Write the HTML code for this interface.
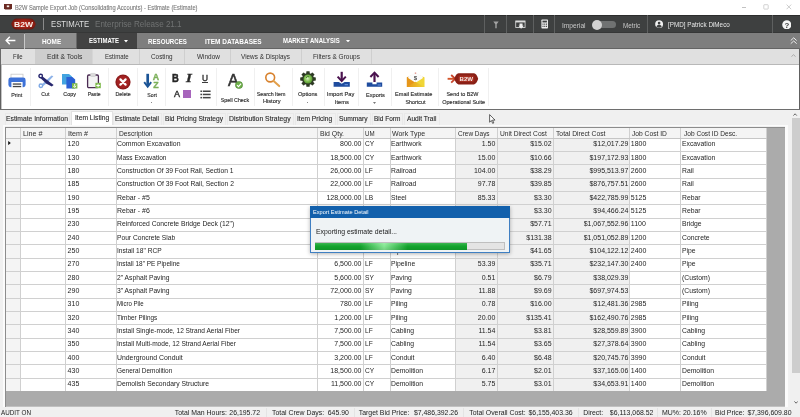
<!DOCTYPE html>
<html lang="en"><head><meta charset="utf-8"><title>B2W Sample Export Job (Consolidating Accounts) - Estimate (Estimate)</title>
<style>
html,body{margin:0;padding:0;background:#fff;overflow:hidden}
#app{position:relative;width:800px;height:417px;overflow:hidden;will-change:transform;font-family:"Liberation Sans",sans-serif}
#app div,#app span,#app svg{position:absolute;display:block}
#app span{white-space:pre}
</style></head><body><div id="app">
<div style="left:0px;top:0px;width:800px;height:15px;background:#ffffff;"></div>
<svg style="left:4px;top:4.4px" width="8" height="5.4" viewBox="0 0 8 5.4"><path d="M0 0h8v4.2l-1 1.2h-6l-1-1.2z" fill="#6a2a22"/><rect x="2.8" y="1.4" width="2.4" height="1.8" fill="#f6eae6"/></svg>
<span style="left:15.00px;top:2.10px;line-height:11px;font-family:'Liberation Sans', sans-serif;font-size:6.4px;color:#787878;transform:scaleX(0.8967);transform-origin:0 50%;-webkit-text-stroke:0.1px #787878;">B2W Sample Export Job (Consolidating Accounts) - Estimate (Estimate)</span>
<div style="left:742.4px;top:7px;width:3.4px;height:1px;background:#c2c2c2;"></div>
<svg style="left:763px;top:4px" width="6" height="6" viewBox="0 0 6 6"><rect x="0.8" y="0.7" width="4.4" height="4.4" rx="0.6" fill="none" stroke="#c0c0c0" stroke-width="0.7"/></svg>
<svg style="left:786px;top:4px" width="6" height="6" viewBox="0 0 6 6"><path d="M0.6 0.6L5.2 5.2M5.2 0.6L0.6 5.2" stroke="#bcbcbc" stroke-width="0.75" fill="none"/></svg>
<div style="left:0px;top:15px;width:800px;height:18px;background:#3e4040;"></div>
<div style="left:0px;top:15px;width:800px;height:1px;background:#2c2d2d;"></div>
<div style="left:0px;top:32px;width:800px;height:1px;background:#363737;"></div>
<svg style="left:9px;top:17px" width="29" height="14" viewBox="0 0 29 14">
<defs><radialGradient id="lg" cx="50%" cy="50%" r="60%"><stop offset="0" stop-color="#c22a1a"/><stop offset="0.6" stop-color="#9a2014"/><stop offset="1" stop-color="#5c1810"/></radialGradient></defs>
<path d="M7 1.4h15q3.400 0.600 4.800 5.600q-1.400 5-4.800 5.600h-15q-3.400-0.600-4.800-5.600q1.400-5 4.800-5.600z" fill="url(#lg)"/>
<text x="14.500" y="9.500" font-family="Liberation Sans, sans-serif" font-weight="bold" font-size="6.400" fill="#f6eee8" text-anchor="middle" textLength="19" lengthAdjust="spacingAndGlyphs">B2W</text></svg>
<div style="left:43px;top:18px;width:1px;height:12px;background:#8a8a8a;"></div>
<span style="left:51.40px;top:17.20px;line-height:14px;font-family:'Liberation Sans', sans-serif;font-size:8.9px;color:#dedede;transform:scaleX(0.8757);transform-origin:0 50%;">ESTIMATE</span>
<span style="left:94.90px;top:17.40px;line-height:14px;font-family:'Liberation Sans', sans-serif;font-size:8.7px;color:#707272;transform:scaleX(0.9290);transform-origin:0 50%;">Enterprise Release 21.1</span>
<div style="left:484px;top:15px;width:1px;height:18px;background:#5e6060;"></div>
<div style="left:506.4px;top:15px;width:1px;height:18px;background:#5e6060;"></div>
<div style="left:533.4px;top:15px;width:1px;height:18px;background:#5e6060;"></div>
<div style="left:554.3px;top:15px;width:1px;height:18px;background:#5e6060;"></div>
<div style="left:647px;top:15px;width:1px;height:18px;background:#5e6060;"></div>
<div style="left:772px;top:15px;width:1px;height:18px;background:#5e6060;"></div>
<svg style="left:492.6px;top:21px" width="6" height="7.6" viewBox="0 0 6 7.6"><path d="M0.300 0.400h5.400L3.700 3.200v4H2.300V3.200z" fill="#a2a2a2"/></svg>
<svg style="left:515.4px;top:20.2px" width="10.8" height="9.400" viewBox="0 0 12 10" preserveAspectRatio="none"><rect x="0.8" y="1" width="10.4" height="7" fill="none" stroke="#dcdcdc" stroke-width="0.9"/><rect x="0.8" y="1" width="10.4" height="1.6" fill="#dcdcdc"/><path d="M5 3.8h3.4v2.2h1.3L6.8 9.4 3.8 6h1.2z" fill="#f0f0f0"/></svg>
<svg style="left:540.6px;top:19.4px" width="7.4" height="10" viewBox="0 0 9 11" preserveAspectRatio="none"><rect x="0.5" y="0.5" width="8" height="10" rx="0.8" fill="#efefef"/><rect x="1.8" y="1.8" width="5.4" height="2" fill="#3e4040"/><g fill="#3e4040"><rect x="1.8" y="5" width="1.3" height="1.3"/><rect x="3.9" y="5" width="1.3" height="1.3"/><rect x="6" y="5" width="1.3" height="1.3"/><rect x="1.8" y="7.4" width="1.3" height="1.3"/><rect x="3.9" y="7.4" width="1.3" height="1.3"/><rect x="6" y="7.4" width="1.3" height="1.3"/></g></svg>
<span style="left:561.60px;top:19.80px;line-height:11px;font-family:'Liberation Sans', sans-serif;font-size:6.5px;color:#c8c8c8;transform:scaleX(1.0205);transform-origin:0 50%;">Imperial</span>
<div style="left:593px;top:21px;width:23px;height:7px;border-radius:3.5px;background:#707272"></div>
<div style="left:591.5px;top:19.5px;width:10px;height:10px;border-radius:5px;background:#d2d2d2"></div>
<span style="left:623.00px;top:19.80px;line-height:11px;font-family:'Liberation Sans', sans-serif;font-size:6.5px;color:#c8c8c8;transform:scaleX(0.9716);transform-origin:0 50%;">Metric</span>
<svg style="left:655.3px;top:20.3px" width="8.200" height="8.200" viewBox="0 0 9 9"><circle cx="4.5" cy="4.5" r="4.3" fill="#f2f2f2"/><circle cx="4.5" cy="3.4" r="1.5" fill="#3e4040"/><path d="M1.7 7.4c0.3-1.8 1.5-2.3 2.8-2.3s2.5 0.5 2.8 2.3c-0.8 0.8-1.8 1.2-2.8 1.2s-2-0.4-2.8-1.2z" fill="#3e4040"/></svg>
<span style="left:667.60px;top:19.10px;line-height:11px;font-family:'Liberation Sans', sans-serif;font-size:6.6px;color:#e8e8e8;transform:scaleX(0.9584);transform-origin:0 50%;">[PMD] Patrick DiMeco</span>
<svg style="left:781.7px;top:19.8px" width="9.600" height="9.600" viewBox="0 0 9 9"><circle cx="4.5" cy="4.5" r="4.3" fill="#f6f6f6"/><text x="4.5" y="7.2" font-family="Liberation Sans, sans-serif" font-weight="bold" font-size="7.4" fill="#3e4040" text-anchor="middle">?</text></svg>
<div style="left:0px;top:33px;width:800px;height:16px;background:#7e7e7e;"></div>
<div style="left:25px;top:33px;width:52px;height:16px;background:#8f8f8f;"></div>
<div style="left:76px;top:33px;width:1px;height:16px;background:#686868;"></div>
<div style="left:77px;top:33px;width:60px;height:16px;background:#424242;"></div>
<div style="left:0px;top:48px;width:800px;height:1px;background:#646464;"></div>
<div style="left:77px;top:48px;width:60px;height:1px;background:#3a3a3a;"></div>
<div style="left:24px;top:34px;width:1px;height:15px;background:#c8c8c8;"></div>
<svg style="left:5px;top:36px" width="11" height="9" viewBox="0 0 11 9"><path d="M4.8 0.7L1.2 4.5 4.8 8.3M1.4 4.5H10.4" stroke="#fff" stroke-width="1.5" fill="none"/></svg>
<span style="left:41.60px;top:35.80px;line-height:11px;font-family:'Liberation Sans', sans-serif;font-size:6.4px;color:#ffffff;font-weight:bold;transform:scaleX(1.0007);transform-origin:0 50%;">HOME</span>
<span style="left:89.00px;top:35.30px;line-height:11px;font-family:'Liberation Sans', sans-serif;font-size:6.4px;color:#ffffff;font-weight:bold;transform:scaleX(0.9421);transform-origin:0 50%;">ESTIMATE</span>
<svg style="left:123.6px;top:40.3px" width="4" height="2.4" viewBox="0 0 4 2.4"><path d="M0 0h4L2 2.4z" fill="#fff"/></svg>
<span style="left:147.50px;top:35.80px;line-height:11px;font-family:'Liberation Sans', sans-serif;font-size:6.4px;color:#ffffff;font-weight:bold;transform:scaleX(0.9609);transform-origin:0 50%;">RESOURCES</span>
<span style="left:205.00px;top:35.80px;line-height:11px;font-family:'Liberation Sans', sans-serif;font-size:6.4px;color:#ffffff;font-weight:bold;transform:scaleX(1.0133);transform-origin:0 50%;">ITEM DATABASES</span>
<span style="left:282.50px;top:35.10px;line-height:11px;font-family:'Liberation Sans', sans-serif;font-size:6.4px;color:#ffffff;font-weight:bold;transform:scaleX(0.9355);transform-origin:0 50%;">MARKET ANALYSIS</span>
<svg style="left:345.8px;top:39.8px" width="4" height="2.4" viewBox="0 0 4 2.4"><path d="M0 0h4L2 2.4z" fill="#fff"/></svg>
<svg style="left:789.6px;top:37.4px" width="7.400" height="7.400" viewBox="0 0 8 8"><path d="M0.8 3.8L4 0.9 7.2 3.8M0.8 7.2L4 4.3 7.2 7.2" stroke="#f4f4f4" stroke-width="1" fill="none"/></svg>
<div style="left:0px;top:49px;width:800px;height:15px;background:#e0e0e0;"></div>
<div style="left:35px;top:49px;width:57px;height:15px;background:#cecece;"></div>
<div style="left:92px;top:49px;width:1px;height:15px;background:#d6d6d6;"></div>
<div style="left:0px;top:64px;width:800px;height:1px;background:#b8b8b8;"></div>
<div style="left:0px;top:49px;width:1px;height:16px;background:#6a6a6a;"></div>
<div style="left:799px;top:49px;width:1px;height:16px;background:#606060;"></div>
<div style="left:139px;top:49px;width:1px;height:15px;background:#cfcfcf;"></div>
<div style="left:184px;top:49px;width:1px;height:15px;background:#cfcfcf;"></div>
<div style="left:230px;top:49px;width:1px;height:15px;background:#cfcfcf;"></div>
<div style="left:301px;top:49px;width:1px;height:15px;background:#cfcfcf;"></div>
<div style="left:371px;top:49px;width:1px;height:15px;background:#cfcfcf;"></div>
<span style="left:12.80px;top:51.00px;line-height:11px;font-family:'Liberation Sans', sans-serif;font-size:6.6px;color:#303030;transform:scaleX(0.9129);transform-origin:0 50%;">File</span>
<span style="left:46.60px;top:51.00px;line-height:11px;font-family:'Liberation Sans', sans-serif;font-size:6.6px;color:#303030;transform:scaleX(1.0230);transform-origin:0 50%;">Edit &amp; Tools</span>
<span style="left:104.60px;top:51.00px;line-height:11px;font-family:'Liberation Sans', sans-serif;font-size:6.6px;color:#303030;transform:scaleX(0.9238);transform-origin:0 50%;">Estimate</span>
<span style="left:151.30px;top:51.00px;line-height:11px;font-family:'Liberation Sans', sans-serif;font-size:6.6px;color:#303030;transform:scaleX(0.9660);transform-origin:0 50%;">Costing</span>
<span style="left:196.50px;top:51.00px;line-height:11px;font-family:'Liberation Sans', sans-serif;font-size:6.6px;color:#303030;transform:scaleX(0.9764);transform-origin:0 50%;">Window</span>
<span style="left:241.40px;top:51.00px;line-height:11px;font-family:'Liberation Sans', sans-serif;font-size:6.6px;color:#303030;transform:scaleX(0.9692);transform-origin:0 50%;">Views &amp; Displays</span>
<span style="left:313.30px;top:51.00px;line-height:11px;font-family:'Liberation Sans', sans-serif;font-size:6.6px;color:#303030;transform:scaleX(0.9845);transform-origin:0 50%;">Filters &amp; Groups</span>
<svg style="left:791.2px;top:54.2px" width="5" height="3" viewBox="0 0 5 3"><path d="M0.4 2.7L2.5 0.7 4.6 2.7" stroke="#9c9c9c" stroke-width="0.8" fill="none"/></svg>
<div style="left:0px;top:65px;width:800px;height:45px;background:#606060;"></div>
<div style="left:1px;top:65px;width:798px;height:44px;background:#ffffff;"></div>
<div style="left:1px;top:65px;width:1px;height:44px;background:#c4c4c4;"></div>
<div style="left:0px;top:109px;width:800px;height:1px;background:#6e6e6e;"></div>
<div style="left:30px;top:68px;width:1px;height:38px;background:#f0f0f0;"></div>
<div style="left:108px;top:68px;width:1px;height:38px;background:#f0f0f0;"></div>
<div style="left:137px;top:68px;width:1px;height:38px;background:#f0f0f0;"></div>
<div style="left:165px;top:68px;width:1px;height:38px;background:#f0f0f0;"></div>
<div style="left:216px;top:68px;width:1px;height:38px;background:#f0f0f0;"></div>
<div style="left:253.6px;top:68px;width:1px;height:38px;background:#f0f0f0;"></div>
<div style="left:291.6px;top:68px;width:1px;height:38px;background:#f0f0f0;"></div>
<div style="left:324.3px;top:68px;width:1px;height:38px;background:#f0f0f0;"></div>
<div style="left:357.8px;top:68px;width:1px;height:38px;background:#f0f0f0;"></div>
<div style="left:391px;top:68px;width:1px;height:38px;background:#f0f0f0;"></div>
<div style="left:437.6px;top:68px;width:1px;height:38px;background:#f0f0f0;"></div>
<div style="left:488.3px;top:68px;width:1px;height:38px;background:#f0f0f0;"></div>
<svg style="left:8px;top:72.8px" width="18" height="17" viewBox="0 0 18 17">
<rect x="3" y="1.2" width="12" height="5" fill="#fff" stroke="#c9c9c9" stroke-width="0.8"/>
<rect x="0.4" y="4.6" width="17.2" height="9.6" rx="2.4" fill="#3e72d8"/>
<rect x="3.4" y="9" width="11.2" height="7" fill="#fff"/>
<rect x="4.8" y="10.4" width="8.4" height="1.3" fill="#444"/><rect x="4.8" y="12.9" width="8.4" height="1.3" fill="#444"/></svg>
<span style="left:10.84px;top:89.60px;line-height:10px;font-family:'Liberation Sans', sans-serif;font-size:5.6px;color:#2c2c2c;transform:scaleX(0.9552);transform-origin:50% 50%;-webkit-text-stroke:0.14px #2c2c2c;">Print</span>
<svg style="left:37.8px;top:73px" width="17" height="16" viewBox="0 0 17 16">
<path d="M3.6 11.6L13.6 2.6 15.4 3.2 9.6 9.6 5.2 13z" fill="#8db2e8"/>
<path d="M2.6 5.2L4.6 3.4 15.6 12 13.8 13.6 8.4 10.8z" fill="#26266e"/>
<circle cx="2.7" cy="3" r="1.75" fill="#fff" stroke="#26266e" stroke-width="1.4"/>
<circle cx="2.9" cy="12.8" r="1.75" fill="#fff" stroke="#7ea8e4" stroke-width="1.4"/></svg>
<span style="left:40.94px;top:89.30px;line-height:10px;font-family:'Liberation Sans', sans-serif;font-size:5.6px;color:#2c2c2c;transform:scaleX(0.9176);transform-origin:50% 50%;-webkit-text-stroke:0.14px #2c2c2c;">Cut</span>
<svg style="left:61px;top:72px" width="17" height="17" viewBox="0 0 17 17">
<path d="M1 2h7l3 2.600v8H1z" fill="#43a4e0"/>
<path d="M5.400 5h6l2.800 2.400v9H5.400z" fill="#2a60d4"/>
<rect x="11" y="11.200" width="5.400" height="5.300" fill="#7db84a"/>
<path d="M13.700 12v2.600M12.300 13.800l1.400 1.700 1.400-1.700" stroke="#fff" stroke-width="0.9" fill="none"/></svg>
<span style="left:63.47px;top:89.30px;line-height:10px;font-family:'Liberation Sans', sans-serif;font-size:5.6px;color:#2c2c2c;transform:scaleX(0.9646);transform-origin:50% 50%;-webkit-text-stroke:0.14px #2c2c2c;">Copy</span>
<svg style="left:86.2px;top:72.2px" width="16" height="17" viewBox="0 0 16 17">
<rect x="1.6" y="3" width="10.8" height="12.6" rx="1.2" fill="#f3f3f3" stroke="#4a2a52" stroke-width="1.3"/>
<rect x="4.4" y="1.4" width="5.2" height="3" rx="0.8" fill="#dcdcdc" stroke="#b4b4b4" stroke-width="0.4"/>
<rect x="9.4" y="10.8" width="5.4" height="5.4" fill="#7db84a"/>
<path d="M12.1 11.8v3.4M10.4 13.5h3.4" stroke="#fff" stroke-width="1" fill="none"/></svg>
<span style="left:87.04px;top:89.30px;line-height:10px;font-family:'Liberation Sans', sans-serif;font-size:5.6px;color:#2c2c2c;transform:scaleX(0.9083);transform-origin:50% 50%;-webkit-text-stroke:0.14px #2c2c2c;">Paste</span>
<svg style="left:115px;top:73.5px" width="16" height="16" viewBox="0 0 16 16"><circle cx="8" cy="8" r="7.6" fill="#8e1c1c"/><circle cx="8" cy="8" r="6.2" fill="#a32222"/>
<path d="M5.4 5.4l5.2 5.2M10.6 5.4l-5.2 5.2" stroke="#fff" stroke-width="2.2" stroke-linecap="round"/></svg>
<span style="left:115.21px;top:89.30px;line-height:10px;font-family:'Liberation Sans', sans-serif;font-size:5.6px;color:#2c2c2c;transform:scaleX(0.9523);transform-origin:50% 50%;-webkit-text-stroke:0.14px #2c2c2c;">Delete</span>
<svg style="left:143px;top:73px" width="17" height="16" viewBox="0 0 17 16">
<path d="M4.700 0.800v11.600" stroke="#1b5496" stroke-width="2.700"/><path d="M1.200 9.200l3.500 4.600 3.500-4.600" stroke="#1b5496" stroke-width="1.900" fill="none"/>
<text x="13" y="7.2" font-family="Liberation Sans, sans-serif" font-weight="bold" font-size="8.8" fill="#7cb05a" stroke="#7cb05a" stroke-width="0.35" text-anchor="middle">A</text>
<text x="13" y="15.2" font-family="Liberation Sans, sans-serif" font-weight="bold" font-size="8.8" fill="#7cb05a" stroke="#7cb05a" stroke-width="0.35" text-anchor="middle">Z</text></svg>
<span style="left:146.57px;top:90.00px;line-height:10px;font-family:'Liberation Sans', sans-serif;font-size:5.6px;color:#2c2c2c;transform:scaleX(0.9352);transform-origin:50% 50%;-webkit-text-stroke:0.14px #2c2c2c;">Sort</span>
<div style="left:151px;top:102px;width:1.4px;height:1px;background:#8a8a8a;"></div>
<span style="left:171.80px;top:71.20px;line-height:16px;font-family:'Liberation Sans', sans-serif;font-size:10.2px;color:#262626;font-weight:bold;transform:scaleX(0.9240);transform-origin:0 50%;-webkit-text-stroke:0.45px #262626;">B</span>
<span style="left:186.40px;top:68.90px;line-height:19px;font-family:'Liberation Serif', serif;font-size:12px;color:#2a2a2a;font-weight:bold;font-style:italic;transform:scaleX(1.2415);transform-origin:0 50%;-webkit-text-stroke:0.35px #2a2a2a;">I</span>
<span style="left:202.00px;top:71.20px;line-height:14px;font-family:'Liberation Sans', sans-serif;font-size:8.6px;color:#333;transform:scaleX(0.9648);transform-origin:0 50%;-webkit-text-stroke:0.4px #333;">U</span>
<div style="left:202px;top:82px;width:6px;height:1.2px;background:#3c3c3c;"></div>
<span style="left:174.20px;top:86.70px;line-height:15px;font-family:'Liberation Sans', sans-serif;font-size:9.2px;color:#2e2e2e;transform:scaleX(0.9771);transform-origin:0 50%;-webkit-text-stroke:0.4px #2e2e2e;">A</span>
<div style="left:183px;top:90px;width:8px;height:8px;background:#a765bc;"></div>
<svg style="left:199.5px;top:89.5px" width="11" height="9" viewBox="0 0 11 9"><g fill="#444"><rect x="0.4" y="0.5" width="1.8" height="1.5"/><rect x="3" y="0.5" width="7.600" height="1.5"/><rect x="0.4" y="3.700" width="1.8" height="1.5"/><rect x="3" y="3.700" width="7.600" height="1.5"/><rect x="0.4" y="6.900" width="1.8" height="1.5"/><rect x="3" y="6.900" width="7.600" height="1.5"/></g></svg>
<span style="left:227.80px;top:68.10px;line-height:25px;font-family:'Liberation Sans', sans-serif;font-size:16.2px;color:#333;transform:scaleX(0.9803);transform-origin:0 50%;-webkit-text-stroke:0.55px #333;">A</span>
<svg style="left:234.6px;top:81px" width="8" height="8" viewBox="0 0 8 8"><circle cx="4" cy="4" r="3.8" fill="#4f8a34"/><circle cx="4" cy="4" r="3.1" fill="#6fb04a"/><path d="M2 4.1l1.5 1.5 2.6-3" stroke="#fff" stroke-width="1.1" fill="none"/></svg>
<span style="left:219.67px;top:94.50px;line-height:10px;font-family:'Liberation Sans', sans-serif;font-size:5.6px;color:#2c2c2c;transform:scaleX(0.9511);transform-origin:50% 50%;-webkit-text-stroke:0.14px #2c2c2c;">Spell Check</span>
<svg style="left:262.6px;top:71px" width="18" height="17" viewBox="0 0 18 17"><circle cx="7.2" cy="6.5" r="4.4" fill="none" stroke="#d8822e" stroke-width="1.6"/><path d="M10.6 9.9l5.6 5.2" stroke="#e2a04c" stroke-width="2" stroke-linecap="round"/></svg>
<span style="left:256.21px;top:89.30px;line-height:10px;font-family:'Liberation Sans', sans-serif;font-size:5.6px;color:#2c2c2c;transform:scaleX(0.9479);transform-origin:50% 50%;-webkit-text-stroke:0.14px #2c2c2c;">Search Item</span>
<span style="left:263.10px;top:96.40px;line-height:10px;font-family:'Liberation Sans', sans-serif;font-size:5.6px;color:#2c2c2c;transform:scaleX(1.0111);transform-origin:50% 50%;-webkit-text-stroke:0.14px #2c2c2c;">History</span>
<svg style="left:300.4px;top:71.3px" width="16" height="16" viewBox="-8 -8 16 16"><defs><radialGradient id="gg" cx="45%" cy="45%" r="60%"><stop offset="0" stop-color="#d8f0c0"/><stop offset="0.55" stop-color="#7fbf50"/><stop offset="1" stop-color="#4c8a2c"/></radialGradient></defs><g fill="#2e3a24"><rect x="-1.7" y="-7.8" width="3.4" height="4" rx="0.6" transform="rotate(0)"/><rect x="-1.7" y="-7.8" width="3.4" height="4" rx="0.6" transform="rotate(45)"/><rect x="-1.7" y="-7.8" width="3.4" height="4" rx="0.6" transform="rotate(90)"/><rect x="-1.7" y="-7.8" width="3.4" height="4" rx="0.6" transform="rotate(135)"/><rect x="-1.7" y="-7.8" width="3.4" height="4" rx="0.6" transform="rotate(180)"/><rect x="-1.7" y="-7.8" width="3.4" height="4" rx="0.6" transform="rotate(225)"/><rect x="-1.7" y="-7.8" width="3.4" height="4" rx="0.6" transform="rotate(270)"/><rect x="-1.7" y="-7.8" width="3.4" height="4" rx="0.6" transform="rotate(315)"/><circle r="6"/></g><circle r="4.5" fill="url(#gg)"/><path d="M-2 -1.2a2.400 2.400 0 0 1 3.200 -1" stroke="#3f7a28" stroke-width="1" fill="none"/></svg>
<span style="left:298.36px;top:89.30px;line-height:10px;font-family:'Liberation Sans', sans-serif;font-size:5.6px;color:#2c2c2c;transform:scaleX(1.0062);transform-origin:50% 50%;-webkit-text-stroke:0.14px #2c2c2c;">Options</span>
<div style="left:307px;top:102px;width:1.4px;height:1px;background:#8a8a8a;"></div>
<svg style="left:333px;top:71px" width="17" height="17" viewBox="0 0 17 17">
<path d="M8.7 0.8v8.4" stroke="#4a124e" stroke-width="2.2"/><path d="M4.6 5.6l4.1 4.4 4.1-4.4" stroke="#4a124e" stroke-width="2" fill="none"/>
<path d="M0.6 11h5.2l2.9 1.8 2.9-1.8h5.2v4.8H0.6z" fill="#1f4c9e"/><rect x="11.6" y="13" width="3.4" height="1.3" fill="#5f8ad6"/></svg>
<span style="left:327.18px;top:89.30px;line-height:10px;font-family:'Liberation Sans', sans-serif;font-size:5.6px;color:#2c2c2c;transform:scaleX(1.0131);transform-origin:50% 50%;-webkit-text-stroke:0.14px #2c2c2c;">Import Pay</span>
<span style="left:335.16px;top:96.50px;line-height:10px;font-family:'Liberation Sans', sans-serif;font-size:5.6px;color:#2c2c2c;transform:scaleX(1.0228);transform-origin:50% 50%;-webkit-text-stroke:0.14px #2c2c2c;">Items</span>
<svg style="left:366px;top:71px" width="17" height="17" viewBox="0 0 17 17">
<path d="M8.5 2.4v8.6" stroke="#4a124e" stroke-width="2.2"/><path d="M4.4 6l4.1-4.4 4.1 4.4" stroke="#4a124e" stroke-width="2" fill="none"/>
<path d="M0.8 11.6h5.6v1.6h4.2v-1.6h5.6v4.2H0.8z" fill="#1f4c9e"/><rect x="11.6" y="13.4" width="3.4" height="1.2" fill="#5f8ad6"/></svg>
<span style="left:366.12px;top:89.80px;line-height:10px;font-family:'Liberation Sans', sans-serif;font-size:5.6px;color:#2c2c2c;transform:scaleX(0.9911);transform-origin:50% 50%;-webkit-text-stroke:0.14px #2c2c2c;">Exports</span>
<svg style="left:373px;top:101.6px" width="3" height="2" viewBox="0 0 3 2"><path d="M0 0h3L1.5 2z" fill="#777"/></svg>
<svg style="left:406px;top:70.5px" width="19" height="17" viewBox="0 0 19 17">
<defs><linearGradient id="eg" x1="0" x2="1" y1="0" y2="0"><stop offset="0" stop-color="#e6961a"/><stop offset="0.5" stop-color="#ecb626"/><stop offset="1" stop-color="#f0d636"/></linearGradient></defs>
<path d="M0.9 6.300L9.500 2.400 18.300 6.300V16.100H0.900z" fill="url(#eg)"/>
<path d="M9.500 1.300L16.800 5.400V10.600L9.500 12.600 2.200 10.600V5.400z" fill="#fbfbfb"/>
<path d="M0.900 6.300L9.500 11.800 0.900 16.100z" fill="#e6961a"/>
<path d="M18.300 6.300L9.500 11.800 18.300 16.100z" fill="#f0d636"/>
<path d="M0.900 16.100L9.500 10.800 18.300 16.100z" fill="url(#eg)"/>
<rect x="8.800" y="1.700" width="1.400" height="0.800" fill="#d24a38"/>
<text x="9.500" y="9.400" font-family="Liberation Sans, sans-serif" font-weight="bold" font-size="6" fill="#4c4c4c" text-anchor="middle">$</text></svg>
<span style="left:395.44px;top:89.30px;line-height:10px;font-family:'Liberation Sans', sans-serif;font-size:5.6px;color:#2c2c2c;transform:scaleX(0.9970);transform-origin:50% 50%;-webkit-text-stroke:0.14px #2c2c2c;">Email Estimate</span>
<span style="left:404.78px;top:96.70px;line-height:10px;font-family:'Liberation Sans', sans-serif;font-size:5.6px;color:#2c2c2c;transform:scaleX(0.9595);transform-origin:50% 50%;-webkit-text-stroke:0.14px #2c2c2c;">Shortcut</span>
<svg style="left:447px;top:72px" width="32" height="14" viewBox="0 0 32 14">
<path d="M0.6 6.8h7" stroke="#d4552a" stroke-width="1.9"/><path d="M4.2 3l4 3.8-4 3.8" stroke="#c8442a" stroke-width="1.8" fill="none"/>
<path d="M11.500 1.200h15.500q2.600 0.400 4.200 5.600q-1.600 5.200-4.200 5.600h-15.500q-2.600-0.400-4.200-5.600q1.600-5.200 4.200-5.600z" fill="#8a2016"/>
<rect x="11.400" y="3.600" width="15.800" height="6.400" rx="1.400" fill="#a42c1e"/>
<text x="19.300" y="9" font-family="Liberation Sans, sans-serif" font-weight="bold" font-size="5.600" fill="#f8ece8" text-anchor="middle" textLength="13.600" lengthAdjust="spacingAndGlyphs">B2W</text></svg>
<span style="left:446.32px;top:89.30px;line-height:10px;font-family:'Liberation Sans', sans-serif;font-size:5.6px;color:#2c2c2c;transform:scaleX(0.9706);transform-origin:50% 50%;-webkit-text-stroke:0.14px #2c2c2c;">Send to B2W</span>
<span style="left:441.78px;top:96.70px;line-height:10px;font-family:'Liberation Sans', sans-serif;font-size:5.6px;color:#2c2c2c;transform:scaleX(0.9900);transform-origin:50% 50%;-webkit-text-stroke:0.14px #2c2c2c;">Operational Suite</span>
<div style="left:0px;top:110px;width:800px;height:297px;background:#f0f0f0;"></div>
<div style="left:3px;top:125px;width:785px;height:1px;background:#fbfbfb;"></div>
<div style="left:3px;top:125px;width:2px;height:282px;background:#fbfbfb;"></div>
<div style="left:785px;top:125px;width:3px;height:282px;background:#fbfbfb;"></div>
<div style="left:4.5px;top:113px;width:65.5px;height:11.5px;background:#f1f1f1;border:1px solid #e9e9e9;border-bottom:none;box-sizing:border-box;border-radius:1px 1px 0 0"></div>
<span style="left:6.00px;top:112.50px;line-height:12px;font-family:'Liberation Sans', sans-serif;font-size:7.1px;color:#262626;transform:scaleX(0.9529);transform-origin:0 50%;-webkit-text-stroke:0.1px #262626;">Estimate Information</span>
<div style="left:70.5px;top:111px;width:42.0px;height:14px;background:#fff;border:1px solid #e2e2e2;border-bottom:none;box-sizing:border-box;border-radius:1px 1px 0 0"></div>
<span style="left:74.60px;top:111.70px;line-height:12px;font-family:'Liberation Sans', sans-serif;font-size:7.1px;color:#262626;transform:scaleX(0.9426);transform-origin:0 50%;-webkit-text-stroke:0.1px #262626;">Item Listing</span>
<div style="left:113.0px;top:113px;width:48.5px;height:11.5px;background:#f1f1f1;border:1px solid #e9e9e9;border-bottom:none;box-sizing:border-box;border-radius:1px 1px 0 0"></div>
<span style="left:115.00px;top:112.50px;line-height:12px;font-family:'Liberation Sans', sans-serif;font-size:7.1px;color:#262626;transform:scaleX(0.9224);transform-origin:0 50%;-webkit-text-stroke:0.1px #262626;">Estimate Detail</span>
<div style="left:162.5px;top:113px;width:63px;height:11.5px;background:#f1f1f1;border:1px solid #e9e9e9;border-bottom:none;box-sizing:border-box;border-radius:1px 1px 0 0"></div>
<span style="left:165.00px;top:112.50px;line-height:12px;font-family:'Liberation Sans', sans-serif;font-size:7.1px;color:#262626;transform:scaleX(0.9310);transform-origin:0 50%;-webkit-text-stroke:0.1px #262626;">Bid Pricing Strategy</span>
<div style="left:226.5px;top:113px;width:67px;height:11.5px;background:#f1f1f1;border:1px solid #e9e9e9;border-bottom:none;box-sizing:border-box;border-radius:1px 1px 0 0"></div>
<span style="left:229.40px;top:112.50px;line-height:12px;font-family:'Liberation Sans', sans-serif;font-size:7.1px;color:#262626;transform:scaleX(0.9644);transform-origin:0 50%;-webkit-text-stroke:0.1px #262626;">Distribution Strategy</span>
<div style="left:294.5px;top:113px;width:41px;height:11.5px;background:#f1f1f1;border:1px solid #e9e9e9;border-bottom:none;box-sizing:border-box;border-radius:1px 1px 0 0"></div>
<span style="left:297.40px;top:112.50px;line-height:12px;font-family:'Liberation Sans', sans-serif;font-size:7.1px;color:#262626;transform:scaleX(0.9398);transform-origin:0 50%;-webkit-text-stroke:0.1px #262626;">Item Pricing</span>
<div style="left:336.5px;top:113px;width:34px;height:11.5px;background:#f1f1f1;border:1px solid #e9e9e9;border-bottom:none;box-sizing:border-box;border-radius:1px 1px 0 0"></div>
<span style="left:339.00px;top:112.50px;line-height:12px;font-family:'Liberation Sans', sans-serif;font-size:7.1px;color:#262626;transform:scaleX(0.9420);transform-origin:0 50%;-webkit-text-stroke:0.1px #262626;">Summary</span>
<div style="left:371.5px;top:113px;width:31.5px;height:11.5px;background:#f1f1f1;border:1px solid #e9e9e9;border-bottom:none;box-sizing:border-box;border-radius:1px 1px 0 0"></div>
<span style="left:374.00px;top:112.50px;line-height:12px;font-family:'Liberation Sans', sans-serif;font-size:7.1px;color:#262626;transform:scaleX(0.9173);transform-origin:0 50%;-webkit-text-stroke:0.1px #262626;">Bid Form</span>
<div style="left:404.0px;top:113px;width:35.5px;height:11.5px;background:#f1f1f1;border:1px solid #e9e9e9;border-bottom:none;box-sizing:border-box;border-radius:1px 1px 0 0"></div>
<span style="left:406.60px;top:112.50px;line-height:12px;font-family:'Liberation Sans', sans-serif;font-size:7.1px;color:#262626;transform:scaleX(0.9319);transform-origin:0 50%;-webkit-text-stroke:0.1px #262626;">Audit Trail</span>
<div style="left:5px;top:127px;width:779.6px;height:279px;background:#ababab;"></div>
<div style="left:5px;top:406px;width:779.6px;height:1px;background:#c0c0c0;"></div>
<div style="left:5px;top:127px;width:1px;height:279.6px;background:#8c8c8c;"></div>
<div style="left:5px;top:127px;width:779.6px;height:1px;background:#8c8c8c;"></div>
<div style="left:792px;top:118px;width:8px;height:255px;background:#cdcdcd;"></div>
<svg style="left:793.4px;top:112.8px" width="4.2" height="3" viewBox="0 0 4.2 3"><path d="M0.4 2.6L2.1 0.8 3.8 2.6" stroke="#555" stroke-width="0.9" fill="none"/></svg>
<svg style="left:793.5px;top:401.2px" width="4.2" height="3" viewBox="0 0 4.2 3"><path d="M0.4 0.4L2.1 2.2 3.8 0.4" stroke="#555" stroke-width="0.9" fill="none"/></svg>
<div style="left:6px;top:128px;width:761px;height:10px;background:#f4f4f4;"></div>
<div style="left:6px;top:138px;width:761px;height:253px;background:#ffffff;"></div>
<div style="left:6px;top:138px;width:14px;height:253px;background:#f4f4f4;"></div>
<div style="left:455.5px;top:139px;width:174.0px;height:252px;background:#f0f0f0;"></div>
<div style="left:20px;top:128px;width:1px;height:263px;background:#d0d0d0;"></div>
<div style="left:65px;top:128px;width:1px;height:263px;background:#d0d0d0;"></div>
<div style="left:116px;top:128px;width:1px;height:263px;background:#d0d0d0;"></div>
<div style="left:317px;top:128px;width:1px;height:263px;background:#d0d0d0;"></div>
<div style="left:363px;top:128px;width:1px;height:263px;background:#d0d0d0;"></div>
<div style="left:390px;top:128px;width:1px;height:263px;background:#d0d0d0;"></div>
<div style="left:455px;top:128px;width:1px;height:263px;background:#d0d0d0;"></div>
<div style="left:497px;top:128px;width:1px;height:263px;background:#d0d0d0;"></div>
<div style="left:553px;top:128px;width:1px;height:263px;background:#d0d0d0;"></div>
<div style="left:629px;top:128px;width:1px;height:263px;background:#d0d0d0;"></div>
<div style="left:680px;top:128px;width:1px;height:263px;background:#d0d0d0;"></div>
<div style="left:766px;top:128px;width:1px;height:263px;background:#d0d0d0;"></div>
<div style="left:6px;top:138px;width:761px;height:1px;background:#c6c6c6;"></div>
<div style="left:6px;top:151px;width:761px;height:1px;background:#d0d0d0;"></div>
<div style="left:6px;top:164px;width:761px;height:1px;background:#d0d0d0;"></div>
<div style="left:6px;top:178px;width:761px;height:1px;background:#d0d0d0;"></div>
<div style="left:6px;top:191px;width:761px;height:1px;background:#d0d0d0;"></div>
<div style="left:6px;top:204px;width:761px;height:1px;background:#d0d0d0;"></div>
<div style="left:6px;top:218px;width:761px;height:1px;background:#d0d0d0;"></div>
<div style="left:6px;top:231px;width:761px;height:1px;background:#d0d0d0;"></div>
<div style="left:6px;top:244px;width:761px;height:1px;background:#d0d0d0;"></div>
<div style="left:6px;top:258px;width:761px;height:1px;background:#d0d0d0;"></div>
<div style="left:6px;top:271px;width:761px;height:1px;background:#d0d0d0;"></div>
<div style="left:6px;top:284px;width:761px;height:1px;background:#d0d0d0;"></div>
<div style="left:6px;top:298px;width:761px;height:1px;background:#d0d0d0;"></div>
<div style="left:6px;top:311px;width:761px;height:1px;background:#d0d0d0;"></div>
<div style="left:6px;top:324px;width:761px;height:1px;background:#d0d0d0;"></div>
<div style="left:6px;top:338px;width:761px;height:1px;background:#d0d0d0;"></div>
<div style="left:6px;top:351px;width:761px;height:1px;background:#d0d0d0;"></div>
<div style="left:6px;top:364px;width:761px;height:1px;background:#d0d0d0;"></div>
<div style="left:6px;top:378px;width:761px;height:1px;background:#d0d0d0;"></div>
<span style="left:22.60px;top:127.70px;line-height:12px;font-family:'Liberation Sans', sans-serif;font-size:7.0px;color:#2c2c2c;transform:scaleX(1.0274);transform-origin:0 50%;">Line #</span>
<span style="left:68.00px;top:127.70px;line-height:12px;font-family:'Liberation Sans', sans-serif;font-size:7.0px;color:#2c2c2c;transform:scaleX(1.0281);transform-origin:0 50%;">Item #</span>
<span style="left:118.80px;top:127.70px;line-height:12px;font-family:'Liberation Sans', sans-serif;font-size:7.0px;color:#2c2c2c;transform:scaleX(0.9596);transform-origin:0 50%;">Description</span>
<span style="left:320.00px;top:127.70px;line-height:12px;font-family:'Liberation Sans', sans-serif;font-size:7.0px;color:#2c2c2c;transform:scaleX(0.9840);transform-origin:0 50%;">Bid Qty.</span>
<span style="left:365.40px;top:127.70px;line-height:12px;font-family:'Liberation Sans', sans-serif;font-size:7.0px;color:#2c2c2c;transform:scaleX(0.8815);transform-origin:0 50%;">UM</span>
<span style="left:392.40px;top:127.70px;line-height:12px;font-family:'Liberation Sans', sans-serif;font-size:7.0px;color:#2c2c2c;transform:scaleX(0.9999);transform-origin:0 50%;">Work Type</span>
<span style="left:458.10px;top:127.70px;line-height:12px;font-family:'Liberation Sans', sans-serif;font-size:7.0px;color:#2c2c2c;transform:scaleX(0.9230);transform-origin:0 50%;">Crew Days</span>
<span style="left:499.90px;top:127.70px;line-height:12px;font-family:'Liberation Sans', sans-serif;font-size:7.0px;color:#2c2c2c;transform:scaleX(0.9548);transform-origin:0 50%;">Unit Direct Cost</span>
<span style="left:556.20px;top:127.70px;line-height:12px;font-family:'Liberation Sans', sans-serif;font-size:7.0px;color:#2c2c2c;transform:scaleX(0.9638);transform-origin:0 50%;">Total Direct Cost</span>
<span style="left:632.30px;top:127.70px;line-height:12px;font-family:'Liberation Sans', sans-serif;font-size:7.0px;color:#2c2c2c;transform:scaleX(0.9541);transform-origin:0 50%;">Job Cost ID</span>
<span style="left:683.75px;top:127.70px;line-height:12px;font-family:'Liberation Sans', sans-serif;font-size:7.0px;color:#2c2c2c;transform:scaleX(0.9411);transform-origin:0 50%;">Job Cost ID Desc.</span>
<span style="left:67.60px;top:138.30px;line-height:12px;font-family:'Liberation Sans', sans-serif;font-size:7.0px;color:#1e1e1e;transform:scaleX(1.0000);transform-origin:0 50%;">120</span>
<span style="left:117.40px;top:138.30px;line-height:12px;font-family:'Liberation Sans', sans-serif;font-size:7.1px;color:#1e1e1e;transform:scaleX(0.9702);transform-origin:0 50%;">Common Excavation</span>
<span style="left:340.08px;top:138.30px;line-height:12px;font-family:'Liberation Sans', sans-serif;font-size:7.0px;color:#1e1e1e;transform:scaleX(1.0000);transform-origin:100% 50%;">800.00</span>
<span style="left:364.60px;top:138.30px;line-height:12px;font-family:'Liberation Sans', sans-serif;font-size:7.0px;color:#1e1e1e;transform:scaleX(0.9434);transform-origin:0 50%;">CY</span>
<span style="left:391.30px;top:138.30px;line-height:12px;font-family:'Liberation Sans', sans-serif;font-size:7.21px;color:#1e1e1e;transform:scaleX(0.9434);transform-origin:0 50%;">Earthwork</span>
<span style="left:481.77px;top:138.30px;line-height:12px;font-family:'Liberation Sans', sans-serif;font-size:7.0px;color:#1e1e1e;transform:scaleX(1.0000);transform-origin:100% 50%;">1.50</span>
<span style="left:530.18px;top:138.30px;line-height:12px;font-family:'Liberation Sans', sans-serif;font-size:7.0px;color:#1e1e1e;transform:scaleX(1.0000);transform-origin:100% 50%;">$15.02</span>
<span style="left:593.35px;top:138.30px;line-height:12px;font-family:'Liberation Sans', sans-serif;font-size:7.0px;color:#1e1e1e;transform:scaleX(1.0000);transform-origin:100% 50%;">$12,017.29</span>
<span style="left:630.80px;top:138.30px;line-height:12px;font-family:'Liberation Sans', sans-serif;font-size:7.0px;color:#1e1e1e;transform:scaleX(1.0000);transform-origin:0 50%;">1800</span>
<span style="left:682.40px;top:138.30px;line-height:12px;font-family:'Liberation Sans', sans-serif;font-size:7.21px;color:#1e1e1e;transform:scaleX(0.9434);transform-origin:0 50%;">Excavation</span>
<span style="left:67.60px;top:151.63px;line-height:12px;font-family:'Liberation Sans', sans-serif;font-size:7.0px;color:#1e1e1e;transform:scaleX(1.0000);transform-origin:0 50%;">130</span>
<span style="left:117.40px;top:151.63px;line-height:12px;font-family:'Liberation Sans', sans-serif;font-size:7.1px;color:#1e1e1e;transform:scaleX(0.9231);transform-origin:0 50%;">Mass Excavation</span>
<span style="left:330.34px;top:151.63px;line-height:12px;font-family:'Liberation Sans', sans-serif;font-size:7.0px;color:#1e1e1e;transform:scaleX(1.0000);transform-origin:100% 50%;">18,500.00</span>
<span style="left:364.60px;top:151.63px;line-height:12px;font-family:'Liberation Sans', sans-serif;font-size:7.0px;color:#1e1e1e;transform:scaleX(0.9434);transform-origin:0 50%;">CY</span>
<span style="left:391.30px;top:151.63px;line-height:12px;font-family:'Liberation Sans', sans-serif;font-size:7.21px;color:#1e1e1e;transform:scaleX(0.9434);transform-origin:0 50%;">Earthwork</span>
<span style="left:477.87px;top:151.63px;line-height:12px;font-family:'Liberation Sans', sans-serif;font-size:7.0px;color:#1e1e1e;transform:scaleX(1.0000);transform-origin:100% 50%;">15.00</span>
<span style="left:530.18px;top:151.63px;line-height:12px;font-family:'Liberation Sans', sans-serif;font-size:7.0px;color:#1e1e1e;transform:scaleX(1.0000);transform-origin:100% 50%;">$10.66</span>
<span style="left:589.46px;top:151.63px;line-height:12px;font-family:'Liberation Sans', sans-serif;font-size:7.0px;color:#1e1e1e;transform:scaleX(1.0000);transform-origin:100% 50%;">$197,172.93</span>
<span style="left:630.80px;top:151.63px;line-height:12px;font-family:'Liberation Sans', sans-serif;font-size:7.0px;color:#1e1e1e;transform:scaleX(1.0000);transform-origin:0 50%;">1800</span>
<span style="left:682.40px;top:151.63px;line-height:12px;font-family:'Liberation Sans', sans-serif;font-size:7.21px;color:#1e1e1e;transform:scaleX(0.9434);transform-origin:0 50%;">Excavation</span>
<span style="left:67.60px;top:164.97px;line-height:12px;font-family:'Liberation Sans', sans-serif;font-size:7.0px;color:#1e1e1e;transform:scaleX(1.0000);transform-origin:0 50%;">180</span>
<span style="left:117.40px;top:164.97px;line-height:12px;font-family:'Liberation Sans', sans-serif;font-size:7.1px;color:#1e1e1e;transform:scaleX(0.9469);transform-origin:0 50%;">Construction Of 39 Foot Rail, Section 1</span>
<span style="left:330.34px;top:164.97px;line-height:12px;font-family:'Liberation Sans', sans-serif;font-size:7.0px;color:#1e1e1e;transform:scaleX(1.0000);transform-origin:100% 50%;">26,000.00</span>
<span style="left:364.60px;top:164.97px;line-height:12px;font-family:'Liberation Sans', sans-serif;font-size:7.0px;color:#1e1e1e;transform:scaleX(0.9434);transform-origin:0 50%;">LF</span>
<span style="left:391.30px;top:164.97px;line-height:12px;font-family:'Liberation Sans', sans-serif;font-size:7.21px;color:#1e1e1e;transform:scaleX(0.9434);transform-origin:0 50%;">Railroad</span>
<span style="left:473.98px;top:164.97px;line-height:12px;font-family:'Liberation Sans', sans-serif;font-size:7.0px;color:#1e1e1e;transform:scaleX(1.0000);transform-origin:100% 50%;">104.00</span>
<span style="left:530.18px;top:164.97px;line-height:12px;font-family:'Liberation Sans', sans-serif;font-size:7.0px;color:#1e1e1e;transform:scaleX(1.0000);transform-origin:100% 50%;">$38.29</span>
<span style="left:589.46px;top:164.97px;line-height:12px;font-family:'Liberation Sans', sans-serif;font-size:7.0px;color:#1e1e1e;transform:scaleX(1.0000);transform-origin:100% 50%;">$995,513.97</span>
<span style="left:630.80px;top:164.97px;line-height:12px;font-family:'Liberation Sans', sans-serif;font-size:7.0px;color:#1e1e1e;transform:scaleX(1.0000);transform-origin:0 50%;">2600</span>
<span style="left:682.40px;top:164.97px;line-height:12px;font-family:'Liberation Sans', sans-serif;font-size:7.21px;color:#1e1e1e;transform:scaleX(0.9434);transform-origin:0 50%;">Rail</span>
<span style="left:67.60px;top:178.30px;line-height:12px;font-family:'Liberation Sans', sans-serif;font-size:7.0px;color:#1e1e1e;transform:scaleX(1.0000);transform-origin:0 50%;">185</span>
<span style="left:117.40px;top:178.30px;line-height:12px;font-family:'Liberation Sans', sans-serif;font-size:7.1px;color:#1e1e1e;transform:scaleX(0.9502);transform-origin:0 50%;">Construction Of 39 Foot Rail, Section 2</span>
<span style="left:330.34px;top:178.30px;line-height:12px;font-family:'Liberation Sans', sans-serif;font-size:7.0px;color:#1e1e1e;transform:scaleX(1.0000);transform-origin:100% 50%;">22,000.00</span>
<span style="left:364.60px;top:178.30px;line-height:12px;font-family:'Liberation Sans', sans-serif;font-size:7.0px;color:#1e1e1e;transform:scaleX(0.9434);transform-origin:0 50%;">LF</span>
<span style="left:391.30px;top:178.30px;line-height:12px;font-family:'Liberation Sans', sans-serif;font-size:7.21px;color:#1e1e1e;transform:scaleX(0.9434);transform-origin:0 50%;">Railroad</span>
<span style="left:477.87px;top:178.30px;line-height:12px;font-family:'Liberation Sans', sans-serif;font-size:7.0px;color:#1e1e1e;transform:scaleX(1.0000);transform-origin:100% 50%;">97.78</span>
<span style="left:530.18px;top:178.30px;line-height:12px;font-family:'Liberation Sans', sans-serif;font-size:7.0px;color:#1e1e1e;transform:scaleX(1.0000);transform-origin:100% 50%;">$39.85</span>
<span style="left:589.46px;top:178.30px;line-height:12px;font-family:'Liberation Sans', sans-serif;font-size:7.0px;color:#1e1e1e;transform:scaleX(1.0000);transform-origin:100% 50%;">$876,757.51</span>
<span style="left:630.80px;top:178.30px;line-height:12px;font-family:'Liberation Sans', sans-serif;font-size:7.0px;color:#1e1e1e;transform:scaleX(1.0000);transform-origin:0 50%;">2600</span>
<span style="left:682.40px;top:178.30px;line-height:12px;font-family:'Liberation Sans', sans-serif;font-size:7.21px;color:#1e1e1e;transform:scaleX(0.9434);transform-origin:0 50%;">Rail</span>
<span style="left:67.60px;top:191.63px;line-height:12px;font-family:'Liberation Sans', sans-serif;font-size:7.0px;color:#1e1e1e;transform:scaleX(1.0000);transform-origin:0 50%;">190</span>
<span style="left:117.40px;top:191.63px;line-height:12px;font-family:'Liberation Sans', sans-serif;font-size:7.1px;color:#1e1e1e;transform:scaleX(0.9801);transform-origin:0 50%;">Rebar - #5</span>
<span style="left:326.45px;top:191.63px;line-height:12px;font-family:'Liberation Sans', sans-serif;font-size:7.0px;color:#1e1e1e;transform:scaleX(1.0000);transform-origin:100% 50%;">128,000.00</span>
<span style="left:364.60px;top:191.63px;line-height:12px;font-family:'Liberation Sans', sans-serif;font-size:7.0px;color:#1e1e1e;transform:scaleX(0.9434);transform-origin:0 50%;">LB</span>
<span style="left:391.30px;top:191.63px;line-height:12px;font-family:'Liberation Sans', sans-serif;font-size:7.21px;color:#1e1e1e;transform:scaleX(0.9434);transform-origin:0 50%;">Steel</span>
<span style="left:477.87px;top:191.63px;line-height:12px;font-family:'Liberation Sans', sans-serif;font-size:7.0px;color:#1e1e1e;transform:scaleX(1.0000);transform-origin:100% 50%;">85.33</span>
<span style="left:534.07px;top:191.63px;line-height:12px;font-family:'Liberation Sans', sans-serif;font-size:7.0px;color:#1e1e1e;transform:scaleX(1.0000);transform-origin:100% 50%;">$3.30</span>
<span style="left:589.46px;top:191.63px;line-height:12px;font-family:'Liberation Sans', sans-serif;font-size:7.0px;color:#1e1e1e;transform:scaleX(1.0000);transform-origin:100% 50%;">$422,785.99</span>
<span style="left:630.80px;top:191.63px;line-height:12px;font-family:'Liberation Sans', sans-serif;font-size:7.0px;color:#1e1e1e;transform:scaleX(1.0000);transform-origin:0 50%;">5125</span>
<span style="left:682.40px;top:191.63px;line-height:12px;font-family:'Liberation Sans', sans-serif;font-size:7.21px;color:#1e1e1e;transform:scaleX(0.9434);transform-origin:0 50%;">Rebar</span>
<span style="left:67.60px;top:204.96px;line-height:12px;font-family:'Liberation Sans', sans-serif;font-size:7.0px;color:#1e1e1e;transform:scaleX(1.0000);transform-origin:0 50%;">195</span>
<span style="left:117.40px;top:204.96px;line-height:12px;font-family:'Liberation Sans', sans-serif;font-size:7.1px;color:#1e1e1e;transform:scaleX(0.9801);transform-origin:0 50%;">Rebar - #6</span>
<span style="left:534.07px;top:204.96px;line-height:12px;font-family:'Liberation Sans', sans-serif;font-size:7.0px;color:#1e1e1e;transform:scaleX(1.0000);transform-origin:100% 50%;">$3.30</span>
<span style="left:593.35px;top:204.96px;line-height:12px;font-family:'Liberation Sans', sans-serif;font-size:7.0px;color:#1e1e1e;transform:scaleX(1.0000);transform-origin:100% 50%;">$94,466.24</span>
<span style="left:630.80px;top:204.96px;line-height:12px;font-family:'Liberation Sans', sans-serif;font-size:7.0px;color:#1e1e1e;transform:scaleX(1.0000);transform-origin:0 50%;">5125</span>
<span style="left:682.40px;top:204.96px;line-height:12px;font-family:'Liberation Sans', sans-serif;font-size:7.21px;color:#1e1e1e;transform:scaleX(0.9434);transform-origin:0 50%;">Rebar</span>
<span style="left:67.60px;top:218.30px;line-height:12px;font-family:'Liberation Sans', sans-serif;font-size:7.0px;color:#1e1e1e;transform:scaleX(1.0000);transform-origin:0 50%;">230</span>
<span style="left:117.40px;top:218.30px;line-height:12px;font-family:'Liberation Sans', sans-serif;font-size:7.1px;color:#1e1e1e;transform:scaleX(0.9545);transform-origin:0 50%;">Reinforced Concrete Bridge Deck (12&quot;)</span>
<span style="left:530.18px;top:218.30px;line-height:12px;font-family:'Liberation Sans', sans-serif;font-size:7.0px;color:#1e1e1e;transform:scaleX(1.0000);transform-origin:100% 50%;">$57.71</span>
<span style="left:583.63px;top:218.30px;line-height:12px;font-family:'Liberation Sans', sans-serif;font-size:7.0px;color:#1e1e1e;transform:scaleX(1.0000);transform-origin:100% 50%;">$1,067,552.96</span>
<span style="left:630.80px;top:218.30px;line-height:12px;font-family:'Liberation Sans', sans-serif;font-size:7.0px;color:#1e1e1e;transform:scaleX(1.0000);transform-origin:0 50%;">1100</span>
<span style="left:682.40px;top:218.30px;line-height:12px;font-family:'Liberation Sans', sans-serif;font-size:7.21px;color:#1e1e1e;transform:scaleX(0.9434);transform-origin:0 50%;">Bridge</span>
<span style="left:67.60px;top:231.63px;line-height:12px;font-family:'Liberation Sans', sans-serif;font-size:7.0px;color:#1e1e1e;transform:scaleX(1.0000);transform-origin:0 50%;">240</span>
<span style="left:117.40px;top:231.63px;line-height:12px;font-family:'Liberation Sans', sans-serif;font-size:7.1px;color:#1e1e1e;transform:scaleX(0.9399);transform-origin:0 50%;">Pour Concrete Slab</span>
<span style="left:526.29px;top:231.63px;line-height:12px;font-family:'Liberation Sans', sans-serif;font-size:7.0px;color:#1e1e1e;transform:scaleX(1.0000);transform-origin:100% 50%;">$131.38</span>
<span style="left:583.63px;top:231.63px;line-height:12px;font-family:'Liberation Sans', sans-serif;font-size:7.0px;color:#1e1e1e;transform:scaleX(1.0000);transform-origin:100% 50%;">$1,051,052.89</span>
<span style="left:630.80px;top:231.63px;line-height:12px;font-family:'Liberation Sans', sans-serif;font-size:7.0px;color:#1e1e1e;transform:scaleX(1.0000);transform-origin:0 50%;">1200</span>
<span style="left:682.40px;top:231.63px;line-height:12px;font-family:'Liberation Sans', sans-serif;font-size:7.21px;color:#1e1e1e;transform:scaleX(0.9434);transform-origin:0 50%;">Concrete</span>
<span style="left:67.60px;top:244.96px;line-height:12px;font-family:'Liberation Sans', sans-serif;font-size:7.0px;color:#1e1e1e;transform:scaleX(1.0000);transform-origin:0 50%;">250</span>
<span style="left:117.40px;top:244.96px;line-height:12px;font-family:'Liberation Sans', sans-serif;font-size:7.1px;color:#1e1e1e;transform:scaleX(0.9319);transform-origin:0 50%;">Install 18&quot; RCP</span>
<span style="left:391.30px;top:244.96px;line-height:12px;font-family:'Liberation Sans', sans-serif;font-size:7.21px;color:#1e1e1e;transform:scaleX(0.9434);transform-origin:0 50%;">Pipeline</span>
<span style="left:530.18px;top:244.96px;line-height:12px;font-family:'Liberation Sans', sans-serif;font-size:7.0px;color:#1e1e1e;transform:scaleX(1.0000);transform-origin:100% 50%;">$41.65</span>
<span style="left:589.46px;top:244.96px;line-height:12px;font-family:'Liberation Sans', sans-serif;font-size:7.0px;color:#1e1e1e;transform:scaleX(1.0000);transform-origin:100% 50%;">$104,122.12</span>
<span style="left:630.80px;top:244.96px;line-height:12px;font-family:'Liberation Sans', sans-serif;font-size:7.0px;color:#1e1e1e;transform:scaleX(1.0000);transform-origin:0 50%;">2400</span>
<span style="left:682.40px;top:244.96px;line-height:12px;font-family:'Liberation Sans', sans-serif;font-size:7.21px;color:#1e1e1e;transform:scaleX(0.9434);transform-origin:0 50%;">Pipe</span>
<span style="left:67.60px;top:258.30px;line-height:12px;font-family:'Liberation Sans', sans-serif;font-size:7.0px;color:#1e1e1e;transform:scaleX(1.0000);transform-origin:0 50%;">270</span>
<span style="left:117.40px;top:258.30px;line-height:12px;font-family:'Liberation Sans', sans-serif;font-size:7.1px;color:#1e1e1e;transform:scaleX(0.9049);transform-origin:0 50%;">Install 18&quot; PE Pipeline</span>
<span style="left:334.25px;top:258.30px;line-height:12px;font-family:'Liberation Sans', sans-serif;font-size:7.0px;color:#1e1e1e;transform:scaleX(1.0000);transform-origin:100% 50%;">6,500.00</span>
<span style="left:364.60px;top:258.30px;line-height:12px;font-family:'Liberation Sans', sans-serif;font-size:7.0px;color:#1e1e1e;transform:scaleX(0.9434);transform-origin:0 50%;">LF</span>
<span style="left:391.30px;top:258.30px;line-height:12px;font-family:'Liberation Sans', sans-serif;font-size:7.21px;color:#1e1e1e;transform:scaleX(0.9434);transform-origin:0 50%;">Pipeline</span>
<span style="left:477.87px;top:258.30px;line-height:12px;font-family:'Liberation Sans', sans-serif;font-size:7.0px;color:#1e1e1e;transform:scaleX(1.0000);transform-origin:100% 50%;">53.39</span>
<span style="left:530.18px;top:258.30px;line-height:12px;font-family:'Liberation Sans', sans-serif;font-size:7.0px;color:#1e1e1e;transform:scaleX(1.0000);transform-origin:100% 50%;">$35.71</span>
<span style="left:589.46px;top:258.30px;line-height:12px;font-family:'Liberation Sans', sans-serif;font-size:7.0px;color:#1e1e1e;transform:scaleX(1.0000);transform-origin:100% 50%;">$232,147.30</span>
<span style="left:630.80px;top:258.30px;line-height:12px;font-family:'Liberation Sans', sans-serif;font-size:7.0px;color:#1e1e1e;transform:scaleX(1.0000);transform-origin:0 50%;">2400</span>
<span style="left:682.40px;top:258.30px;line-height:12px;font-family:'Liberation Sans', sans-serif;font-size:7.21px;color:#1e1e1e;transform:scaleX(0.9434);transform-origin:0 50%;">Pipe</span>
<span style="left:67.60px;top:271.63px;line-height:12px;font-family:'Liberation Sans', sans-serif;font-size:7.0px;color:#1e1e1e;transform:scaleX(1.0000);transform-origin:0 50%;">280</span>
<span style="left:117.40px;top:271.63px;line-height:12px;font-family:'Liberation Sans', sans-serif;font-size:7.1px;color:#1e1e1e;transform:scaleX(0.9472);transform-origin:0 50%;">2&quot; Asphalt Paving</span>
<span style="left:334.25px;top:271.63px;line-height:12px;font-family:'Liberation Sans', sans-serif;font-size:7.0px;color:#1e1e1e;transform:scaleX(1.0000);transform-origin:100% 50%;">5,600.00</span>
<span style="left:364.60px;top:271.63px;line-height:12px;font-family:'Liberation Sans', sans-serif;font-size:7.0px;color:#1e1e1e;transform:scaleX(0.9434);transform-origin:0 50%;">SY</span>
<span style="left:391.30px;top:271.63px;line-height:12px;font-family:'Liberation Sans', sans-serif;font-size:7.21px;color:#1e1e1e;transform:scaleX(0.9434);transform-origin:0 50%;">Paving</span>
<span style="left:481.77px;top:271.63px;line-height:12px;font-family:'Liberation Sans', sans-serif;font-size:7.0px;color:#1e1e1e;transform:scaleX(1.0000);transform-origin:100% 50%;">0.51</span>
<span style="left:534.07px;top:271.63px;line-height:12px;font-family:'Liberation Sans', sans-serif;font-size:7.0px;color:#1e1e1e;transform:scaleX(1.0000);transform-origin:100% 50%;">$6.79</span>
<span style="left:593.35px;top:271.63px;line-height:12px;font-family:'Liberation Sans', sans-serif;font-size:7.0px;color:#1e1e1e;transform:scaleX(1.0000);transform-origin:100% 50%;">$38,029.39</span>
<span style="left:682.40px;top:271.63px;line-height:12px;font-family:'Liberation Sans', sans-serif;font-size:7.21px;color:#1e1e1e;transform:scaleX(0.9434);transform-origin:0 50%;">(Custom)</span>
<span style="left:67.60px;top:284.96px;line-height:12px;font-family:'Liberation Sans', sans-serif;font-size:7.0px;color:#1e1e1e;transform:scaleX(1.0000);transform-origin:0 50%;">290</span>
<span style="left:117.40px;top:284.96px;line-height:12px;font-family:'Liberation Sans', sans-serif;font-size:7.1px;color:#1e1e1e;transform:scaleX(0.9472);transform-origin:0 50%;">3&quot; Asphalt Paving</span>
<span style="left:330.34px;top:284.96px;line-height:12px;font-family:'Liberation Sans', sans-serif;font-size:7.0px;color:#1e1e1e;transform:scaleX(1.0000);transform-origin:100% 50%;">72,000.00</span>
<span style="left:364.60px;top:284.96px;line-height:12px;font-family:'Liberation Sans', sans-serif;font-size:7.0px;color:#1e1e1e;transform:scaleX(0.9434);transform-origin:0 50%;">SY</span>
<span style="left:391.30px;top:284.96px;line-height:12px;font-family:'Liberation Sans', sans-serif;font-size:7.21px;color:#1e1e1e;transform:scaleX(0.9434);transform-origin:0 50%;">Paving</span>
<span style="left:478.40px;top:284.96px;line-height:12px;font-family:'Liberation Sans', sans-serif;font-size:7.0px;color:#1e1e1e;transform:scaleX(1.0000);transform-origin:100% 50%;">11.88</span>
<span style="left:534.07px;top:284.96px;line-height:12px;font-family:'Liberation Sans', sans-serif;font-size:7.0px;color:#1e1e1e;transform:scaleX(1.0000);transform-origin:100% 50%;">$9.69</span>
<span style="left:589.46px;top:284.96px;line-height:12px;font-family:'Liberation Sans', sans-serif;font-size:7.0px;color:#1e1e1e;transform:scaleX(1.0000);transform-origin:100% 50%;">$697,974.53</span>
<span style="left:682.40px;top:284.96px;line-height:12px;font-family:'Liberation Sans', sans-serif;font-size:7.21px;color:#1e1e1e;transform:scaleX(0.9434);transform-origin:0 50%;">(Custom)</span>
<span style="left:67.60px;top:298.30px;line-height:12px;font-family:'Liberation Sans', sans-serif;font-size:7.0px;color:#1e1e1e;transform:scaleX(1.0000);transform-origin:0 50%;">310</span>
<span style="left:117.40px;top:298.30px;line-height:12px;font-family:'Liberation Sans', sans-serif;font-size:7.1px;color:#1e1e1e;transform:scaleX(0.8574);transform-origin:0 50%;">Micro Pile</span>
<span style="left:340.08px;top:298.30px;line-height:12px;font-family:'Liberation Sans', sans-serif;font-size:7.0px;color:#1e1e1e;transform:scaleX(1.0000);transform-origin:100% 50%;">780.00</span>
<span style="left:364.60px;top:298.30px;line-height:12px;font-family:'Liberation Sans', sans-serif;font-size:7.0px;color:#1e1e1e;transform:scaleX(0.9434);transform-origin:0 50%;">LF</span>
<span style="left:391.30px;top:298.30px;line-height:12px;font-family:'Liberation Sans', sans-serif;font-size:7.21px;color:#1e1e1e;transform:scaleX(0.9434);transform-origin:0 50%;">Piling</span>
<span style="left:481.77px;top:298.30px;line-height:12px;font-family:'Liberation Sans', sans-serif;font-size:7.0px;color:#1e1e1e;transform:scaleX(1.0000);transform-origin:100% 50%;">0.78</span>
<span style="left:530.18px;top:298.30px;line-height:12px;font-family:'Liberation Sans', sans-serif;font-size:7.0px;color:#1e1e1e;transform:scaleX(1.0000);transform-origin:100% 50%;">$16.00</span>
<span style="left:593.35px;top:298.30px;line-height:12px;font-family:'Liberation Sans', sans-serif;font-size:7.0px;color:#1e1e1e;transform:scaleX(1.0000);transform-origin:100% 50%;">$12,481.36</span>
<span style="left:630.80px;top:298.30px;line-height:12px;font-family:'Liberation Sans', sans-serif;font-size:7.0px;color:#1e1e1e;transform:scaleX(1.0000);transform-origin:0 50%;">2985</span>
<span style="left:682.40px;top:298.30px;line-height:12px;font-family:'Liberation Sans', sans-serif;font-size:7.21px;color:#1e1e1e;transform:scaleX(0.9434);transform-origin:0 50%;">Piling</span>
<span style="left:67.60px;top:311.63px;line-height:12px;font-family:'Liberation Sans', sans-serif;font-size:7.0px;color:#1e1e1e;transform:scaleX(1.0000);transform-origin:0 50%;">320</span>
<span style="left:117.40px;top:311.63px;line-height:12px;font-family:'Liberation Sans', sans-serif;font-size:7.1px;color:#1e1e1e;transform:scaleX(0.8996);transform-origin:0 50%;">Timber Pilings</span>
<span style="left:334.25px;top:311.63px;line-height:12px;font-family:'Liberation Sans', sans-serif;font-size:7.0px;color:#1e1e1e;transform:scaleX(1.0000);transform-origin:100% 50%;">1,200.00</span>
<span style="left:364.60px;top:311.63px;line-height:12px;font-family:'Liberation Sans', sans-serif;font-size:7.0px;color:#1e1e1e;transform:scaleX(0.9434);transform-origin:0 50%;">LF</span>
<span style="left:391.30px;top:311.63px;line-height:12px;font-family:'Liberation Sans', sans-serif;font-size:7.21px;color:#1e1e1e;transform:scaleX(0.9434);transform-origin:0 50%;">Piling</span>
<span style="left:477.87px;top:311.63px;line-height:12px;font-family:'Liberation Sans', sans-serif;font-size:7.0px;color:#1e1e1e;transform:scaleX(1.0000);transform-origin:100% 50%;">20.00</span>
<span style="left:526.29px;top:311.63px;line-height:12px;font-family:'Liberation Sans', sans-serif;font-size:7.0px;color:#1e1e1e;transform:scaleX(1.0000);transform-origin:100% 50%;">$135.41</span>
<span style="left:589.46px;top:311.63px;line-height:12px;font-family:'Liberation Sans', sans-serif;font-size:7.0px;color:#1e1e1e;transform:scaleX(1.0000);transform-origin:100% 50%;">$162,490.76</span>
<span style="left:630.80px;top:311.63px;line-height:12px;font-family:'Liberation Sans', sans-serif;font-size:7.0px;color:#1e1e1e;transform:scaleX(1.0000);transform-origin:0 50%;">2985</span>
<span style="left:682.40px;top:311.63px;line-height:12px;font-family:'Liberation Sans', sans-serif;font-size:7.21px;color:#1e1e1e;transform:scaleX(0.9434);transform-origin:0 50%;">Piling</span>
<span style="left:67.60px;top:324.96px;line-height:12px;font-family:'Liberation Sans', sans-serif;font-size:7.0px;color:#1e1e1e;transform:scaleX(1.0000);transform-origin:0 50%;">340</span>
<span style="left:117.40px;top:324.96px;line-height:12px;font-family:'Liberation Sans', sans-serif;font-size:7.1px;color:#1e1e1e;transform:scaleX(0.9256);transform-origin:0 50%;">Install Single-mode, 12 Strand Aerial Fiber</span>
<span style="left:334.25px;top:324.96px;line-height:12px;font-family:'Liberation Sans', sans-serif;font-size:7.0px;color:#1e1e1e;transform:scaleX(1.0000);transform-origin:100% 50%;">7,500.00</span>
<span style="left:364.60px;top:324.96px;line-height:12px;font-family:'Liberation Sans', sans-serif;font-size:7.0px;color:#1e1e1e;transform:scaleX(0.9434);transform-origin:0 50%;">LF</span>
<span style="left:391.30px;top:324.96px;line-height:12px;font-family:'Liberation Sans', sans-serif;font-size:7.21px;color:#1e1e1e;transform:scaleX(0.9434);transform-origin:0 50%;">Cabling</span>
<span style="left:478.40px;top:324.96px;line-height:12px;font-family:'Liberation Sans', sans-serif;font-size:7.0px;color:#1e1e1e;transform:scaleX(1.0000);transform-origin:100% 50%;">11.54</span>
<span style="left:534.07px;top:324.96px;line-height:12px;font-family:'Liberation Sans', sans-serif;font-size:7.0px;color:#1e1e1e;transform:scaleX(1.0000);transform-origin:100% 50%;">$3.81</span>
<span style="left:593.35px;top:324.96px;line-height:12px;font-family:'Liberation Sans', sans-serif;font-size:7.0px;color:#1e1e1e;transform:scaleX(1.0000);transform-origin:100% 50%;">$28,559.89</span>
<span style="left:630.80px;top:324.96px;line-height:12px;font-family:'Liberation Sans', sans-serif;font-size:7.0px;color:#1e1e1e;transform:scaleX(1.0000);transform-origin:0 50%;">3900</span>
<span style="left:682.40px;top:324.96px;line-height:12px;font-family:'Liberation Sans', sans-serif;font-size:7.21px;color:#1e1e1e;transform:scaleX(0.9434);transform-origin:0 50%;">Cabling</span>
<span style="left:67.60px;top:338.30px;line-height:12px;font-family:'Liberation Sans', sans-serif;font-size:7.0px;color:#1e1e1e;transform:scaleX(1.0000);transform-origin:0 50%;">350</span>
<span style="left:117.40px;top:338.30px;line-height:12px;font-family:'Liberation Sans', sans-serif;font-size:7.1px;color:#1e1e1e;transform:scaleX(0.9283);transform-origin:0 50%;">Install Multi-mode, 12 Strand Aerial Fiber</span>
<span style="left:334.25px;top:338.30px;line-height:12px;font-family:'Liberation Sans', sans-serif;font-size:7.0px;color:#1e1e1e;transform:scaleX(1.0000);transform-origin:100% 50%;">7,500.00</span>
<span style="left:364.60px;top:338.30px;line-height:12px;font-family:'Liberation Sans', sans-serif;font-size:7.0px;color:#1e1e1e;transform:scaleX(0.9434);transform-origin:0 50%;">LF</span>
<span style="left:391.30px;top:338.30px;line-height:12px;font-family:'Liberation Sans', sans-serif;font-size:7.21px;color:#1e1e1e;transform:scaleX(0.9434);transform-origin:0 50%;">Cabling</span>
<span style="left:478.40px;top:338.30px;line-height:12px;font-family:'Liberation Sans', sans-serif;font-size:7.0px;color:#1e1e1e;transform:scaleX(1.0000);transform-origin:100% 50%;">11.54</span>
<span style="left:534.07px;top:338.30px;line-height:12px;font-family:'Liberation Sans', sans-serif;font-size:7.0px;color:#1e1e1e;transform:scaleX(1.0000);transform-origin:100% 50%;">$3.65</span>
<span style="left:593.35px;top:338.30px;line-height:12px;font-family:'Liberation Sans', sans-serif;font-size:7.0px;color:#1e1e1e;transform:scaleX(1.0000);transform-origin:100% 50%;">$27,378.64</span>
<span style="left:630.80px;top:338.30px;line-height:12px;font-family:'Liberation Sans', sans-serif;font-size:7.0px;color:#1e1e1e;transform:scaleX(1.0000);transform-origin:0 50%;">3900</span>
<span style="left:682.40px;top:338.30px;line-height:12px;font-family:'Liberation Sans', sans-serif;font-size:7.21px;color:#1e1e1e;transform:scaleX(0.9434);transform-origin:0 50%;">Cabling</span>
<span style="left:67.60px;top:351.63px;line-height:12px;font-family:'Liberation Sans', sans-serif;font-size:7.0px;color:#1e1e1e;transform:scaleX(1.0000);transform-origin:0 50%;">400</span>
<span style="left:117.40px;top:351.63px;line-height:12px;font-family:'Liberation Sans', sans-serif;font-size:7.1px;color:#1e1e1e;transform:scaleX(0.9691);transform-origin:0 50%;">Underground Conduit</span>
<span style="left:334.25px;top:351.63px;line-height:12px;font-family:'Liberation Sans', sans-serif;font-size:7.0px;color:#1e1e1e;transform:scaleX(1.0000);transform-origin:100% 50%;">3,200.00</span>
<span style="left:364.60px;top:351.63px;line-height:12px;font-family:'Liberation Sans', sans-serif;font-size:7.0px;color:#1e1e1e;transform:scaleX(0.9434);transform-origin:0 50%;">LF</span>
<span style="left:391.30px;top:351.63px;line-height:12px;font-family:'Liberation Sans', sans-serif;font-size:7.21px;color:#1e1e1e;transform:scaleX(0.9434);transform-origin:0 50%;">Conduit</span>
<span style="left:481.77px;top:351.63px;line-height:12px;font-family:'Liberation Sans', sans-serif;font-size:7.0px;color:#1e1e1e;transform:scaleX(1.0000);transform-origin:100% 50%;">6.40</span>
<span style="left:534.07px;top:351.63px;line-height:12px;font-family:'Liberation Sans', sans-serif;font-size:7.0px;color:#1e1e1e;transform:scaleX(1.0000);transform-origin:100% 50%;">$6.48</span>
<span style="left:593.35px;top:351.63px;line-height:12px;font-family:'Liberation Sans', sans-serif;font-size:7.0px;color:#1e1e1e;transform:scaleX(1.0000);transform-origin:100% 50%;">$20,745.76</span>
<span style="left:630.80px;top:351.63px;line-height:12px;font-family:'Liberation Sans', sans-serif;font-size:7.0px;color:#1e1e1e;transform:scaleX(1.0000);transform-origin:0 50%;">3990</span>
<span style="left:682.40px;top:351.63px;line-height:12px;font-family:'Liberation Sans', sans-serif;font-size:7.21px;color:#1e1e1e;transform:scaleX(0.9434);transform-origin:0 50%;">Conduit</span>
<span style="left:67.60px;top:364.96px;line-height:12px;font-family:'Liberation Sans', sans-serif;font-size:7.0px;color:#1e1e1e;transform:scaleX(1.0000);transform-origin:0 50%;">430</span>
<span style="left:117.40px;top:364.96px;line-height:12px;font-family:'Liberation Sans', sans-serif;font-size:7.1px;color:#1e1e1e;transform:scaleX(0.9097);transform-origin:0 50%;">General Demolition</span>
<span style="left:330.34px;top:364.96px;line-height:12px;font-family:'Liberation Sans', sans-serif;font-size:7.0px;color:#1e1e1e;transform:scaleX(1.0000);transform-origin:100% 50%;">18,500.00</span>
<span style="left:364.60px;top:364.96px;line-height:12px;font-family:'Liberation Sans', sans-serif;font-size:7.0px;color:#1e1e1e;transform:scaleX(0.9434);transform-origin:0 50%;">CY</span>
<span style="left:391.30px;top:364.96px;line-height:12px;font-family:'Liberation Sans', sans-serif;font-size:7.21px;color:#1e1e1e;transform:scaleX(0.9434);transform-origin:0 50%;">Demolition</span>
<span style="left:481.77px;top:364.96px;line-height:12px;font-family:'Liberation Sans', sans-serif;font-size:7.0px;color:#1e1e1e;transform:scaleX(1.0000);transform-origin:100% 50%;">6.17</span>
<span style="left:534.07px;top:364.96px;line-height:12px;font-family:'Liberation Sans', sans-serif;font-size:7.0px;color:#1e1e1e;transform:scaleX(1.0000);transform-origin:100% 50%;">$2.01</span>
<span style="left:593.35px;top:364.96px;line-height:12px;font-family:'Liberation Sans', sans-serif;font-size:7.0px;color:#1e1e1e;transform:scaleX(1.0000);transform-origin:100% 50%;">$37,165.06</span>
<span style="left:630.80px;top:364.96px;line-height:12px;font-family:'Liberation Sans', sans-serif;font-size:7.0px;color:#1e1e1e;transform:scaleX(1.0000);transform-origin:0 50%;">1400</span>
<span style="left:682.40px;top:364.96px;line-height:12px;font-family:'Liberation Sans', sans-serif;font-size:7.21px;color:#1e1e1e;transform:scaleX(0.9434);transform-origin:0 50%;">Demolition</span>
<span style="left:67.60px;top:378.29px;line-height:12px;font-family:'Liberation Sans', sans-serif;font-size:7.0px;color:#1e1e1e;transform:scaleX(1.0000);transform-origin:0 50%;">435</span>
<span style="left:117.40px;top:378.29px;line-height:12px;font-family:'Liberation Sans', sans-serif;font-size:7.1px;color:#1e1e1e;transform:scaleX(0.9563);transform-origin:0 50%;">Demolish Secondary Structure</span>
<span style="left:330.88px;top:378.29px;line-height:12px;font-family:'Liberation Sans', sans-serif;font-size:7.0px;color:#1e1e1e;transform:scaleX(1.0000);transform-origin:100% 50%;">11,500.00</span>
<span style="left:364.60px;top:378.29px;line-height:12px;font-family:'Liberation Sans', sans-serif;font-size:7.0px;color:#1e1e1e;transform:scaleX(0.9434);transform-origin:0 50%;">CY</span>
<span style="left:391.30px;top:378.29px;line-height:12px;font-family:'Liberation Sans', sans-serif;font-size:7.21px;color:#1e1e1e;transform:scaleX(0.9434);transform-origin:0 50%;">Demolition</span>
<span style="left:481.77px;top:378.29px;line-height:12px;font-family:'Liberation Sans', sans-serif;font-size:7.0px;color:#1e1e1e;transform:scaleX(1.0000);transform-origin:100% 50%;">5.75</span>
<span style="left:534.07px;top:378.29px;line-height:12px;font-family:'Liberation Sans', sans-serif;font-size:7.0px;color:#1e1e1e;transform:scaleX(1.0000);transform-origin:100% 50%;">$3.01</span>
<span style="left:593.35px;top:378.29px;line-height:12px;font-family:'Liberation Sans', sans-serif;font-size:7.0px;color:#1e1e1e;transform:scaleX(1.0000);transform-origin:100% 50%;">$34,653.91</span>
<span style="left:630.80px;top:378.29px;line-height:12px;font-family:'Liberation Sans', sans-serif;font-size:7.0px;color:#1e1e1e;transform:scaleX(1.0000);transform-origin:0 50%;">1400</span>
<span style="left:682.40px;top:378.29px;line-height:12px;font-family:'Liberation Sans', sans-serif;font-size:7.21px;color:#1e1e1e;transform:scaleX(0.9434);transform-origin:0 50%;">Demolition</span>
<svg style="left:8.2px;top:141.2px" width="3" height="4.2" viewBox="0 0 3 4.2"><path d="M0.2 0.1L2.8 2.1 0.2 4.1z" fill="#111"/></svg>
<div style="left:0px;top:407px;width:800px;height:10px;background:#f0f0f0;"></div>
<span style="left:1.30px;top:406.50px;line-height:12px;font-family:'Liberation Sans', sans-serif;font-size:6.9px;color:#222;transform:scaleX(0.9143);transform-origin:0 50%;">AUDIT ON</span>
<span style="left:174.80px;top:406.50px;line-height:12px;font-family:'Liberation Sans', sans-serif;font-size:6.9px;color:#222;transform:scaleX(1.0000);transform-origin:0 50%;">Total Man Hours:</span>
<span style="left:229.34px;top:406.50px;line-height:12px;font-family:'Liberation Sans', sans-serif;font-size:6.9px;color:#222;transform:scaleX(1.0000);transform-origin:100% 50%;">26,195.72</span>
<span style="left:272.00px;top:406.50px;line-height:12px;font-family:'Liberation Sans', sans-serif;font-size:6.9px;color:#222;transform:scaleX(1.0000);transform-origin:0 50%;">Total Crew Days:</span>
<span style="left:327.72px;top:406.50px;line-height:12px;font-family:'Liberation Sans', sans-serif;font-size:6.9px;color:#222;transform:scaleX(1.0000);transform-origin:100% 50%;">645.90</span>
<span style="left:358.80px;top:406.50px;line-height:12px;font-family:'Liberation Sans', sans-serif;font-size:6.9px;color:#222;transform:scaleX(1.0000);transform-origin:0 50%;">Target Bid Price:</span>
<span style="left:413.92px;top:406.50px;line-height:12px;font-family:'Liberation Sans', sans-serif;font-size:6.9px;color:#222;transform:scaleX(1.0000);transform-origin:100% 50%;">$7,486,392.26</span>
<span style="left:469.30px;top:406.50px;line-height:12px;font-family:'Liberation Sans', sans-serif;font-size:6.9px;color:#222;transform:scaleX(1.0000);transform-origin:0 50%;">Total Overall Cost:</span>
<span style="left:528.52px;top:406.50px;line-height:12px;font-family:'Liberation Sans', sans-serif;font-size:6.9px;color:#222;transform:scaleX(1.0000);transform-origin:100% 50%;">$6,155,403.36</span>
<span style="left:583.20px;top:406.50px;line-height:12px;font-family:'Liberation Sans', sans-serif;font-size:6.9px;color:#222;transform:scaleX(1.0000);transform-origin:0 50%;">Direct:</span>
<span style="left:609.84px;top:406.50px;line-height:12px;font-family:'Liberation Sans', sans-serif;font-size:6.9px;color:#222;transform:scaleX(1.0000);transform-origin:100% 50%;">$6,113,068.52</span>
<span style="left:661.90px;top:406.50px;line-height:12px;font-family:'Liberation Sans', sans-serif;font-size:6.9px;color:#222;transform:scaleX(1.0126);transform-origin:0 50%;">MU%: 20.16%</span>
<span style="left:715.00px;top:406.50px;line-height:12px;font-family:'Liberation Sans', sans-serif;font-size:6.9px;color:#222;transform:scaleX(1.0000);transform-origin:0 50%;">Bid Price:</span>
<span style="left:747.42px;top:406.50px;line-height:12px;font-family:'Liberation Sans', sans-serif;font-size:6.9px;color:#222;transform:scaleX(1.0000);transform-origin:100% 50%;">$7,396,609.80</span>
<div style="left:266px;top:408px;width:1px;height:9px;background:#e4e4e4;"></div>
<div style="left:354px;top:408px;width:1px;height:9px;background:#e4e4e4;"></div>
<div style="left:463px;top:408px;width:1px;height:9px;background:#e4e4e4;"></div>
<div style="left:578px;top:408px;width:1px;height:9px;background:#e4e4e4;"></div>
<div style="left:657px;top:408px;width:1px;height:9px;background:#e4e4e4;"></div>
<div style="left:711px;top:408px;width:1px;height:9px;background:#e4e4e4;"></div>
<div style="left:310.4px;top:205.8px;width:199.6px;height:47.6px;background:#eff3f5;box-shadow:0 1px 4px rgba(0,0,0,0.30);border:1px solid #3f7fc2;box-sizing:border-box"></div>
<div style="left:310.4px;top:205.8px;width:199.6px;height:12.4px;background:#1260ac;"></div>
<span style="left:313.20px;top:207.40px;line-height:10px;font-family:'Liberation Sans', sans-serif;font-size:5.8px;color:#ffffff;transform:scaleX(0.9676);transform-origin:0 50%;">Export Estimate Detail</span>
<span style="left:315.60px;top:225.50px;line-height:12px;font-family:'Liberation Sans', sans-serif;font-size:7.1px;color:#1a1a1a;transform:scaleX(0.9690);transform-origin:0 50%;">Exporting estimate detail...</span>
<div style="left:314.5px;top:242.2px;width:190.5px;height:7.8px;background:#e4e4e4;border:1px solid #bfbfbf;box-sizing:border-box"></div>
<div style="left:315px;top:242.6px;width:152px;height:7px;background:linear-gradient(180deg,rgba(255,255,255,0.18) 0%,rgba(255,255,255,0) 45%,rgba(0,0,0,0.10) 100%),linear-gradient(90deg,#12a42c 0%,#12a42c 30%,#86e894 45.5%,#12a42c 61%,#12a42c 100%)"></div>
<svg style="left:488.8px;top:114.4px" width="7" height="10" viewBox="0 0 7 10"><path d="M0.6 0.6v7.6l1.8-1.7 1.3 2.9 1.1-0.5-1.3-2.8h2.5z" fill="#fff" stroke="#222" stroke-width="0.7"/></svg>
</div></body></html>
